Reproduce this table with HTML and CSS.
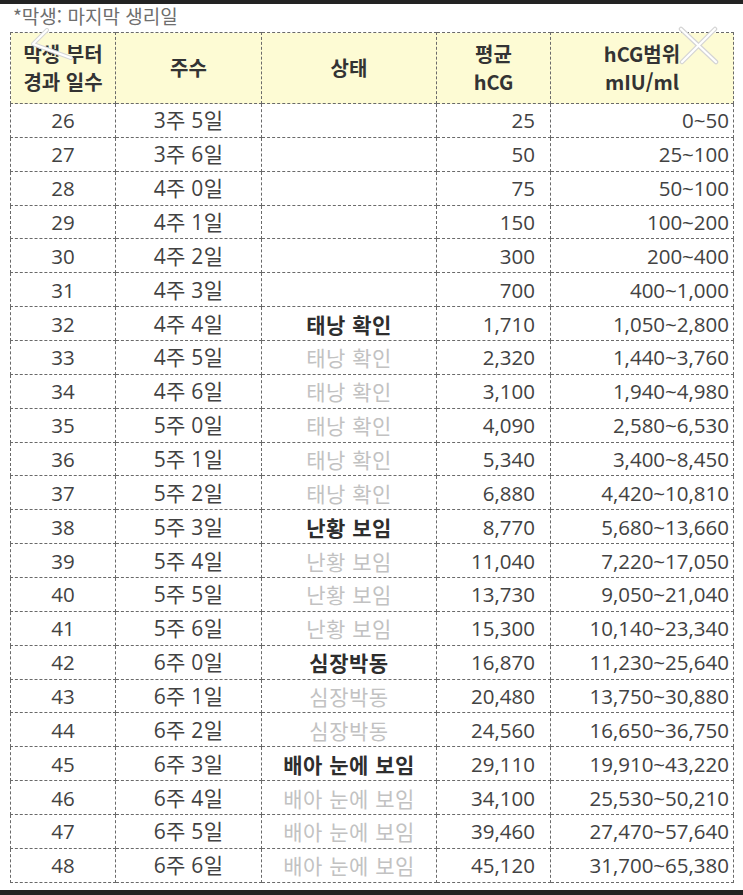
FILE: index.html
```html
<!DOCTYPE html>
<html lang="ko">
<head>
<meta charset="utf-8">
<link rel="stylesheet" href="styles.css">
</head>
<body>
<div class="topbar"></div>
<div class="caption">*막생: 마지막 생리일</div>
<table class="hcg">
  <colgroup>
    <col class="c1"><col class="c2"><col class="c3"><col class="c4"><col class="c5">
  </colgroup>
  <thead>
    <tr>
      <th>막생 부터<br>경과 일수</th>
      <th>주수</th>
      <th>상태</th>
      <th>평균<br>hCG</th>
      <th>hCG범위<br>mIU/ml</th>
    </tr>
  </thead>
  <tbody>
    <tr><td>26</td><td class="w">3주 5일</td><td></td><td class="n">25</td><td class="r">0~50</td></tr>
    <tr><td>27</td><td class="w">3주 6일</td><td></td><td class="n">50</td><td class="r">25~100</td></tr>
    <tr><td>28</td><td class="w">4주 0일</td><td></td><td class="n">75</td><td class="r">50~100</td></tr>
    <tr><td>29</td><td class="w">4주 1일</td><td></td><td class="n">150</td><td class="r">100~200</td></tr>
    <tr><td>30</td><td class="w">4주 2일</td><td></td><td class="n">300</td><td class="r">200~400</td></tr>
    <tr><td>31</td><td class="w">4주 3일</td><td></td><td class="n">700</td><td class="r">400~1,000</td></tr>
    <tr><td>32</td><td class="w">4주 4일</td><td class="on">태낭 확인</td><td class="n">1,710</td><td class="r">1,050~2,800</td></tr>
    <tr><td>33</td><td class="w">4주 5일</td><td class="off">태낭 확인</td><td class="n">2,320</td><td class="r">1,440~3,760</td></tr>
    <tr><td>34</td><td class="w">4주 6일</td><td class="off">태낭 확인</td><td class="n">3,100</td><td class="r">1,940~4,980</td></tr>
    <tr><td>35</td><td class="w">5주 0일</td><td class="off">태낭 확인</td><td class="n">4,090</td><td class="r">2,580~6,530</td></tr>
    <tr><td>36</td><td class="w">5주 1일</td><td class="off">태낭 확인</td><td class="n">5,340</td><td class="r">3,400~8,450</td></tr>
    <tr><td>37</td><td class="w">5주 2일</td><td class="off">태낭 확인</td><td class="n">6,880</td><td class="r">4,420~10,810</td></tr>
    <tr><td>38</td><td class="w">5주 3일</td><td class="on">난황 보임</td><td class="n">8,770</td><td class="r">5,680~13,660</td></tr>
    <tr><td>39</td><td class="w">5주 4일</td><td class="off">난황 보임</td><td class="n">11,040</td><td class="r">7,220~17,050</td></tr>
    <tr><td>40</td><td class="w">5주 5일</td><td class="off">난황 보임</td><td class="n">13,730</td><td class="r">9,050~21,040</td></tr>
    <tr><td>41</td><td class="w">5주 6일</td><td class="off">난황 보임</td><td class="n">15,300</td><td class="r">10,140~23,340</td></tr>
    <tr><td>42</td><td class="w">6주 0일</td><td class="on">심장박동</td><td class="n">16,870</td><td class="r">11,230~25,640</td></tr>
    <tr><td>43</td><td class="w">6주 1일</td><td class="off">심장박동</td><td class="n">20,480</td><td class="r">13,750~30,880</td></tr>
    <tr><td>44</td><td class="w">6주 2일</td><td class="off">심장박동</td><td class="n">24,560</td><td class="r">16,650~36,750</td></tr>
    <tr><td>45</td><td class="w">6주 3일</td><td class="on">배아 눈에 보임</td><td class="n">29,110</td><td class="r">19,910~43,220</td></tr>
    <tr><td>46</td><td class="w">6주 4일</td><td class="off">배아 눈에 보임</td><td class="n">34,100</td><td class="r">25,530~50,210</td></tr>
    <tr><td>47</td><td class="w">6주 5일</td><td class="off">배아 눈에 보임</td><td class="n">39,460</td><td class="r">27,470~57,640</td></tr>
    <tr><td>48</td><td class="w">6주 6일</td><td class="off">배아 눈에 보임</td><td class="n">45,120</td><td class="r">31,700~65,380</td></tr>
  </tbody>
</table>
<div class="bottombar"></div>

<svg class="ov-back" width="60" height="40" viewBox="0 0 60 40">
  <polyline points="16,2 2,16 40,30" fill="none" stroke="#d6d6d6" stroke-width="4" stroke-linecap="round" stroke-linejoin="round"/>
  <polyline points="16,2 2,16 40,30" fill="none" stroke="#ffffff" stroke-width="2" stroke-linecap="round" stroke-linejoin="round"/>
</svg>
<svg class="ov-close" width="44" height="40" viewBox="0 0 44 40">
  <g fill="none" stroke-linecap="round">
    <line x1="4" y1="3" x2="39" y2="36" stroke="#d4d4d4" stroke-width="4.5"/>
    <line x1="38" y1="3" x2="5" y2="36" stroke="#d4d4d4" stroke-width="4.5"/>
    <line x1="4" y1="3" x2="39" y2="36" stroke="#ffffff" stroke-width="2.2"/>
    <line x1="38" y1="3" x2="5" y2="36" stroke="#ffffff" stroke-width="2.2"/>
  </g>
</svg>
</body>
</html>
```

FILE: styles.css
```css
html, body {
  margin: 0;
  padding: 0;
}
body {
  width: 743px;
  height: 895px;
  overflow: hidden;
  background: #ffffff;
  position: relative;
  font-family: "Open Sans", "Noto Sans CJK KR", sans-serif;
  color: #3a3a3a;
}
.topbar {
  height: 4px;
  background: #232323;
}
.caption {
  height: 28px;
  line-height: 24px;
  padding-left: 13px;
  font-family: "Noto Sans CJK KR", sans-serif;
  font-size: 19px;
  color: #6e6e6e;
}
.hcg {
  margin-left: 10px;
  border-collapse: collapse;
  table-layout: fixed;
  width: 723px;
}
.c1 { width: 105px; }
.c2 { width: 146px; }
.c3 { width: 175px; }
.c4 { width: 114px; }
.c5 { width: 183px; }
.hcg th, .hcg td {
  border: 1px dashed #6a6a6a;
  padding: 0;
  text-align: center;
  vertical-align: middle;
  white-space: nowrap;
}
.hcg th {
  background: #fdfbd4;
  height: 70px;
  font-family: "Noto Sans CJK KR", sans-serif;
  font-weight: bold;
  font-size: 20px;
  line-height: 28px;
  color: #333333;
}
.hcg td {
  height: 32.87px;
  font-size: 20.5px;
  line-height: 24px;
  color: #424242;
}
.hcg td.w {
  font-size: 21px;
  letter-spacing: 0.3px;
}
.hcg td.n {
  text-align: right;
  padding-right: 15px;
}
.hcg td.r {
  text-align: right;
  padding-right: 4px;
}
.hcg td.on {
  font-family: "Noto Sans CJK KR", sans-serif;
  font-weight: bold;
  font-size: 21px;
  letter-spacing: 0.5px;
  color: #2e2e2e;
}
.hcg td.off {
  font-family: "Noto Sans CJK KR", sans-serif;
  font-size: 21px;
  letter-spacing: 0.5px;
  color: #c2c2c2;
}
.bottombar {
  position: absolute;
  left: 0;
  right: 0;
  bottom: 0;
  height: 5px;
  background: #232323;
}
.ov-back {
  position: absolute;
  left: 31px;
  top: 28px;
}
.ov-close {
  position: absolute;
  left: 677px;
  top: 26px;
}
```
